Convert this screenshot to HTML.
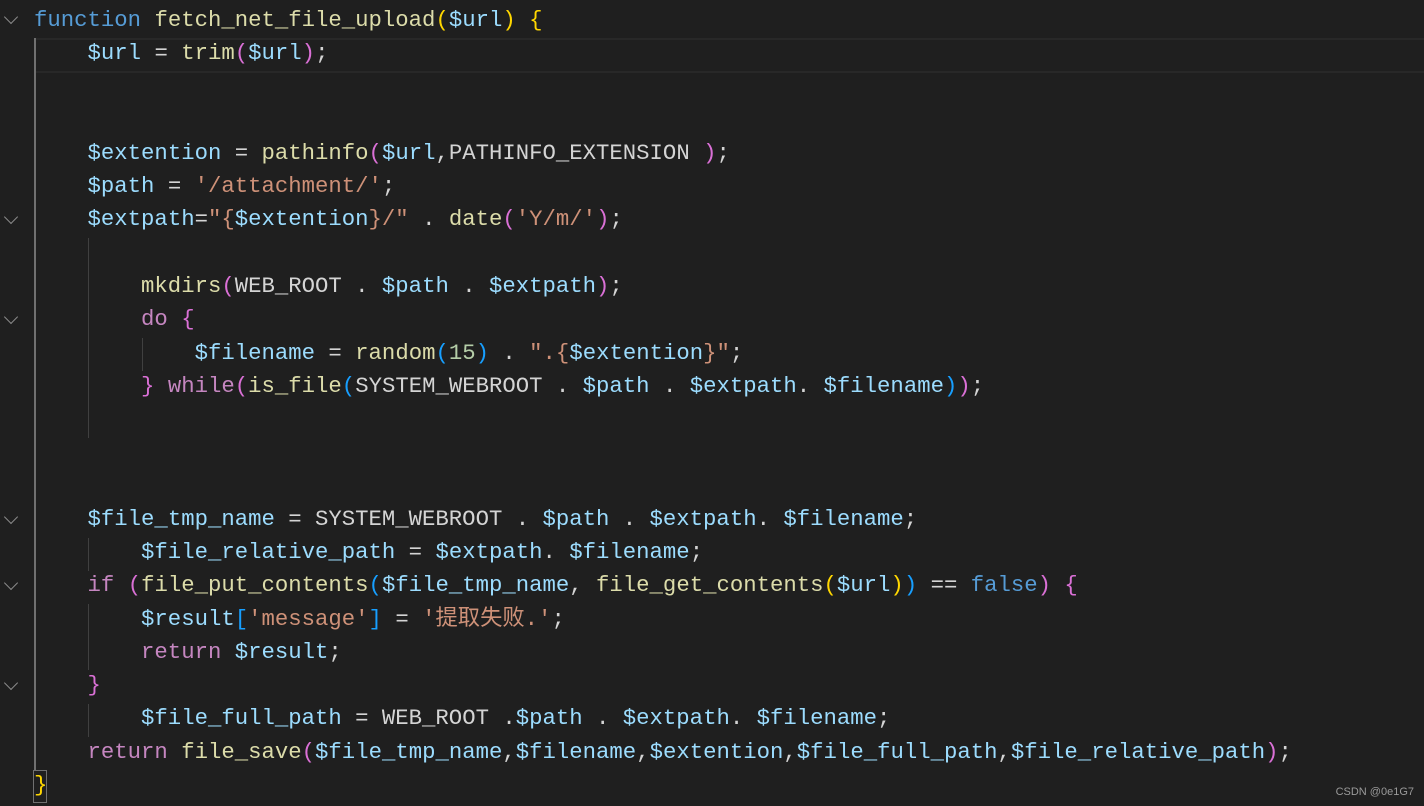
<!DOCTYPE html>
<html><head><meta charset="utf-8"><style>
body{margin:0;width:1424px;height:806px;background:#1f1f1f;overflow:hidden;position:relative;font-family:"Liberation Mono","Noto Sans CJK SC",monospace;font-size:22.3px;}
.l{position:absolute;left:34px;height:33px;line-height:33px;white-space:pre;color:#d4d4d4}
.k{color:#569cd6}.f{color:#dcdcaa}.v{color:#9cdcfe}.s{color:#ce9178}.c{color:#c586c0}
.y{color:#ffd700}.p{color:#da70d6}.b{color:#179fff}
.g{position:absolute;width:1px;background:#404040}
.ch{position:absolute;left:6px;width:9px;height:9px;border-right:1.5px solid #8a8a8a;border-bottom:1.5px solid #8a8a8a;transform:rotate(45deg)}
</style></head><body>
<div style="position:absolute;left:34px;top:38px;width:1390px;height:31px;border-top:2px solid #282828;border-bottom:2px solid #282828"></div>
<div class="g" style="left:34px;top:38px;height:732px;background:#707070;width:2px"></div>
<div class="g" style="left:88px;top:238px;height:200px"></div>
<div class="g" style="left:142px;top:338px;height:33px"></div>
<div class="g" style="left:88px;top:538px;height:33px"></div>
<div class="g" style="left:88px;top:604px;height:66px"></div>
<div class="g" style="left:88px;top:704px;height:33px"></div>
<div class="ch" style="top:12px"></div><div class="ch" style="top:212px"></div><div class="ch" style="top:312px"></div><div class="ch" style="top:512px"></div><div class="ch" style="top:578px"></div><div class="ch" style="top:678px"></div>
<div class="l" style="top:4px"><span class="k">function</span> <span class="f">fetch_net_file_upload</span><span class="y">(</span><span class="v">$url</span><span class="y">)</span> <span class="y">{</span></div>
<div class="l" style="top:37px">    <span class="v">$url</span> = <span class="f">trim</span><span class="p">(</span><span class="v">$url</span><span class="p">)</span>;</div>
<div class="l" style="top:137px">    <span class="v">$extention</span> = <span class="f">pathinfo</span><span class="p">(</span><span class="v">$url</span>,PATHINFO_EXTENSION <span class="p">)</span>;</div>
<div class="l" style="top:170px">    <span class="v">$path</span> = <span class="s">'/attachment/'</span>;</div>
<div class="l" style="top:203px">    <span class="v">$extpath</span>=<span class="s">"{</span><span class="v">$extention</span><span class="s">}/"</span> . <span class="f">date</span><span class="p">(</span><span class="s">'Y/m/'</span><span class="p">)</span>;</div>
<div class="l" style="top:270px">        <span class="f">mkdirs</span><span class="p">(</span>WEB_ROOT . <span class="v">$path</span> . <span class="v">$extpath</span><span class="p">)</span>;</div>
<div class="l" style="top:303px">        <span class="c">do</span> <span class="p">{</span></div>
<div class="l" style="top:337px">            <span class="v">$filename</span> = <span class="f">random</span><span class="b">(</span><span class="s" style="color:#b5cea8">15</span><span class="b">)</span> . <span class="s">".{</span><span class="v">$extention</span><span class="s">}"</span>;</div>
<div class="l" style="top:370px">        <span class="p">}</span> <span class="c">while</span><span class="p">(</span><span class="f">is_file</span><span class="b">(</span>SYSTEM_WEBROOT . <span class="v">$path</span> . <span class="v">$extpath</span>. <span class="v">$filename</span><span class="b">)</span><span class="p">)</span>;</div>
<div class="l" style="top:503px">    <span class="v">$file_tmp_name</span> = SYSTEM_WEBROOT . <span class="v">$path</span> . <span class="v">$extpath</span>. <span class="v">$filename</span>;</div>
<div class="l" style="top:536px">        <span class="v">$file_relative_path</span> = <span class="v">$extpath</span>. <span class="v">$filename</span>;</div>
<div class="l" style="top:569px">    <span class="c">if</span> <span class="p">(</span><span class="f">file_put_contents</span><span class="b">(</span><span class="v">$file_tmp_name</span>, <span class="f">file_get_contents</span><span class="y">(</span><span class="v">$url</span><span class="y">)</span><span class="b">)</span> == <span class="k">false</span><span class="p">)</span> <span class="p">{</span></div>
<div class="l" style="top:603px">        <span class="v">$result</span><span class="b">[</span><span class="s">'message'</span><span class="b">]</span> = <span class="s">'提取失败.'</span>;</div>
<div class="l" style="top:636px">        <span class="c">return</span> <span class="v">$result</span>;</div>
<div class="l" style="top:669px">    <span class="p">}</span></div>
<div class="l" style="top:702px">        <span class="v">$file_full_path</span> = WEB_ROOT .<span class="v">$path</span> . <span class="v">$extpath</span>. <span class="v">$filename</span>;</div>
<div class="l" style="top:736px">    <span class="c">return</span> <span class="f">file_save</span><span class="p">(</span><span class="v">$file_tmp_name</span>,<span class="v">$filename</span>,<span class="v">$extention</span>,<span class="v">$file_full_path</span>,<span class="v">$file_relative_path</span><span class="p">)</span>;</div>
<div style="position:absolute;left:33px;top:770px;width:12px;height:31px;border:1px solid #707070"></div>
<div class="l" style="top:769px"><span class="y">}</span></div>
<div style="position:absolute;right:10px;bottom:8px;font-family:'Liberation Sans',sans-serif;font-size:11px;color:#9a9a9a">CSDN @0e1G7</div>
</body></html>
